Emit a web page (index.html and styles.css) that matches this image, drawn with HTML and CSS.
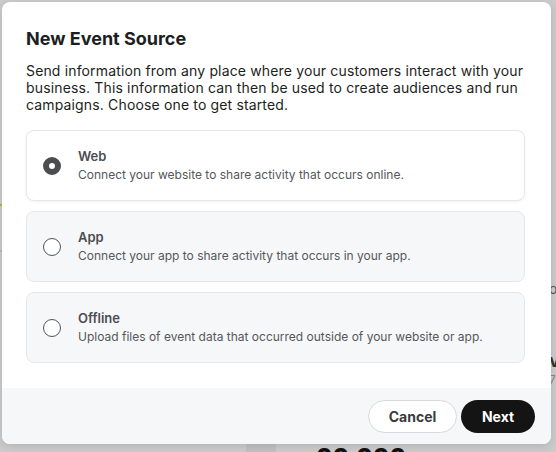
FILE: index.html
```html
<!DOCTYPE html>
<html lang="en">
<head>
    <meta charset="UTF-8">
    <meta name="viewport" content="width=device-width, initial-scale=1.0">
    <title>New Event Source</title>
    <link rel="stylesheet" href="styles.css">
</head>
<body>

<div class="backdrop">
    <div class="bg-line bg-yellow"></div>
    <div class="bg-line bg-rule"></div>
    <div class="bg-block"></div>
    <div class="bg-number">00,000</div>
    <div class="bg-letter bg-o">o</div>
    <div class="bg-letter bg-v">v</div>
    <div class="bg-letter bg-7">7</div>
</div>

<div class="modal">
    <div class="modal-body">
        <h1 class="modal-title">New Event Source</h1>
        <p class="modal-text">Send information from any place where your customers interact with your business. This information can then be used to create audiences and run campaigns. Choose one to get started.</p>

        <div class="options">
            <label class="option selected">
                <span class="radio"></span>
                <span class="option-text">
                    <span class="option-title">Web</span>
                    <span class="option-desc">Connect your website to share activity that occurs online.</span>
                </span>
            </label>
            <label class="option">
                <span class="radio"></span>
                <span class="option-text">
                    <span class="option-title">App</span>
                    <span class="option-desc">Connect your app to share activity that occurs in your app.</span>
                </span>
            </label>
            <label class="option">
                <span class="radio"></span>
                <span class="option-text">
                    <span class="option-title">Offline</span>
                    <span class="option-desc">Upload files of event data that occurred outside of your website or app.</span>
                </span>
            </label>
        </div>
    </div>

    <div class="modal-footer">
        <button class="btn btn-cancel">Cancel</button>
        <button class="btn btn-next">Next</button>
    </div>
</div>

<script>
    document.querySelectorAll('.option').forEach(function(option) {
        option.addEventListener('click', function() {
            document.querySelectorAll('.option').forEach(function(o) {
                o.classList.remove('selected');
            });
            this.classList.add('selected');
        });
    });
</script>

</body>
</html>
```

FILE: styles.css
```css
body {
    margin: 0;
    width: 556px;
    height: 452px;
    overflow: hidden;
    background-color: #cbcbcb;
    font-family: 'Inter', 'Noto Sans', sans-serif;
    position: relative;
}

.backdrop {
    position: absolute;
    inset: 0;
}

.bg-line {
    position: absolute;
    left: 0;
    width: 4px;
    height: 2px;
}

.bg-yellow {
    top: 204px;
    background-color: #c9a640;
}

.bg-rule {
    top: 250px;
    background-color: #bcbcbc;
}

.bg-block {
    position: absolute;
    left: 246px;
    top: 440px;
    width: 30px;
    height: 12px;
    background-color: #c0c0c0;
}

.bg-number {
    position: absolute;
    left: 316px;
    top: 444px;
    font-size: 24px;
    font-weight: 800;
    color: #111;
    line-height: 28px;
}

.bg-letter {
    position: absolute;
    left: 549px;
    color: #555;
    font-size: 14px;
}

.bg-o { top: 280px; }
.bg-v { top: 350px; font-weight: 700; color: #333; font-size: 18px; }
.bg-7 { top: 372px; font-size: 12px; color: #888; }

.modal {
    position: relative;
    margin: 2px 0 0 2px;
    width: 549px;
    height: 442px;
    background-color: #fff;
    border-radius: 8px;
    overflow: hidden;
    display: flex;
    flex-direction: column;
    box-shadow: 0 2px 8px rgba(0, 0, 0, 0.12);
}

.modal-body {
    flex: 1;
    padding: 26px 26px 0 24px;
}

.modal-title {
    margin: 0;
    font-size: 18px;
    line-height: 22px;
    font-weight: 700;
    color: #1c1e21;
}

.modal-text {
    margin: 12px 0 17px;
    font-size: 14px;
    line-height: 17px;
    letter-spacing: 0.15px;
    color: #1c1e21;
}

.options {
    display: flex;
    flex-direction: column;
    gap: 10px;
}

.option {
    display: flex;
    align-items: center;
    gap: 17px;
    height: 71px;
    box-sizing: border-box;
    padding: 0 16px;
    border: 1px solid #e6e7e9;
    border-radius: 8px;
    background-color: #f6f7f9;
    cursor: pointer;
}

.option.selected {
    background-color: #fff;
    box-shadow: 0 1px 3px rgba(0, 0, 0, 0.06);
}

.radio {
    flex: none;
    width: 18px;
    height: 18px;
    box-sizing: border-box;
    border: 1.5px solid #505256;
    border-radius: 50%;
    background-color: #fff;
}

.option.selected .radio {
    border: 6px solid #4b4d51;
}

.option-text {
    display: flex;
    flex-direction: column;
}

.option-title {
    font-size: 13px;
    line-height: 19px;
    font-weight: 600;
    color: #4b4d51;
}

.option-desc {
    font-size: 12px;
    line-height: 18px;
    color: #55575b;
}

.modal-footer {
    height: 56px;
    flex: none;
    display: flex;
    justify-content: flex-end;
    align-items: center;
    gap: 4px;
    padding: 0 16px;
    background-color: #f6f7f9;
}

.btn {
    height: 33px;
    border-radius: 17px;
    font-family: inherit;
    font-size: 14px;
    font-weight: 700;
    cursor: pointer;
}

.btn-cancel {
    width: 89px;
    border: 1px solid #d8d9dc;
    background-color: #fff;
    color: #3a3b3e;
}

.btn-next {
    width: 74px;
    border: none;
    background-color: #141414;
    color: #fff;
}
```
